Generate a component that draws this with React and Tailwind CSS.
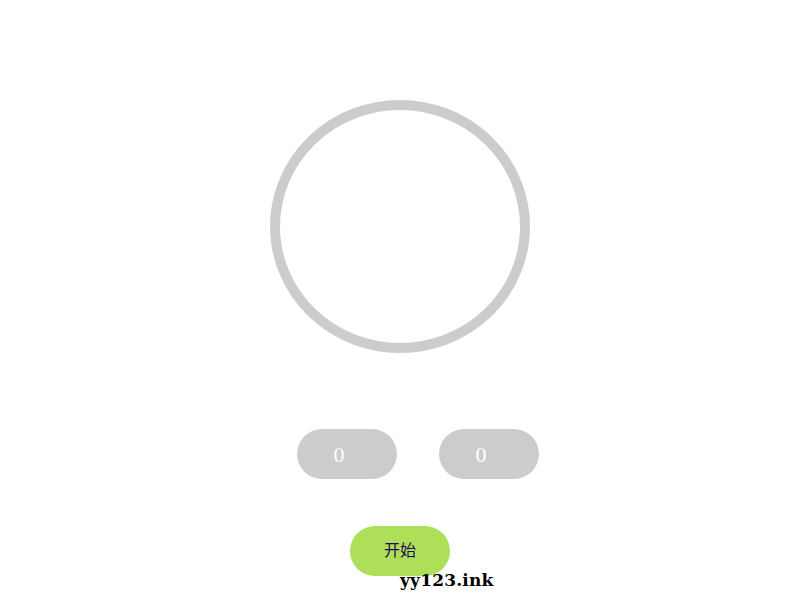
import React, { useState } from "react";

// Reaction game: ring on top, two score pills, start button.
export default function App() {
  const [scores] = useState([0, 0]);

  return (
    <div className="w-[800px] h-[600px] bg-white flex flex-col items-center overflow-hidden">
      {/* Ring */}
      <div className="pt-[100px]">
        <svg width="260" height="253" viewBox="0 0 260 253">
          <ellipse cx="130" cy="126.5" rx="125" ry="121.5" fill="none" stroke="#cccccc" strokeWidth="10" />
        </svg>
      </div>

      {/* Scores */}
      <div className="mt-[76px] flex gap-[42px] pl-[36px]">
        {scores.map((s, i) => (
          <div
            key={i}
            className="w-[100px] h-[50px] rounded-full bg-[#cccccc] flex items-center justify-center pr-[16px] text-white text-[22px]"
            style={{ fontFamily: '"Liberation Serif", serif' }}
          >
            {s}
          </div>
        ))}
      </div>

      {/* Start */}
      <button
        type="button"
        className="mt-[47px] w-[100px] h-[50px] rounded-full bg-[#addf58] text-[#250a55] text-[16px] flex items-center justify-center"
        style={{ fontFamily: '"Liberation Serif", "Noto Sans CJK SC", serif' }}
      >
        开始
      </button>

      <div className="w-full pl-[400px] -mt-[8px]">
        <span
          className="font-bold text-black text-[17px] leading-[20px] tracking-[0.2px]"
          style={{ fontFamily: '"DejaVu Serif", serif' }}
        >
          yy123.ink
        </span>
      </div>
    </div>
  );
}
